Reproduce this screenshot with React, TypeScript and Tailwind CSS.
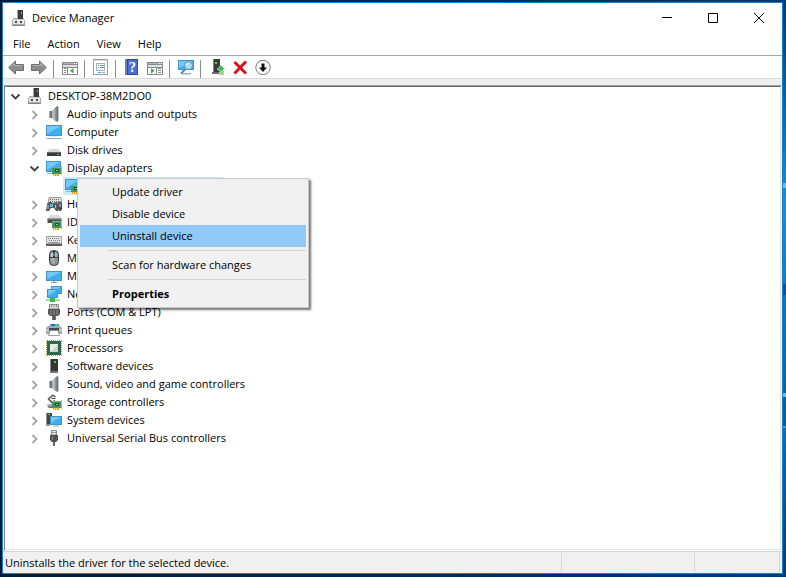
import { useState } from "react";
import type { ReactNode } from "react";

function Icon({ children }: { children: ReactNode }) {
  return (
    <svg width="16" height="16" viewBox="0 0 16 16" className="shrink-0" aria-hidden="true">
      {children}
    </svg>
  );
}

function HostIcon() {
  return (
    <Icon>
      <g shapeRendering="crispEdges">
        <path d="M7 0h5v9H7z" fill="#3d3d3d" />
        <path d="M6 0h1v9H6z" fill="#a3a3a3" />
        <path d="M10 2h1v2h-1z" fill="#35e04a" />
        <path d="M2 8h4v1h6V8h1v2h1v6H1v-6h1z" fill="#a9a9a9" />
        <path d="M2 9h11v1H2z" fill="#c9c9c9" />
        <path d="M2 10h11v4H2z" fill="#e6e6e6" />
        <path d="M4 11h2v2H4zM9 11h2v2H9z" fill="#4a4a4a" />
        <path d="M1 15h13v1H1z" fill="#858585" />
      </g>
    </Icon>
  );
}

function SpeakerIcon() {
  return (
    <Icon>
      <path d="M3 5h3v7H3z" fill="#6f767c" />
      <path d="M3 5h1v7H3z" fill="#a9aeb2" />
      <path d="M6 5l4.500-4.500H12v15h-1.500L6 12z" fill="#9a9fa3" />
      <path d="M6 5l3-3v13l-3-3z" fill="#b5babd" />
      <path d="M9 2l1.500-1.500v15L9 14.500z" fill="#8e9397" />
      <path d="M10.500 .5H12v15h-1.500z" fill="#6d767d" />
      <path d="M12 1h1v14h-1z" fill="#b9c4cc" />
    </Icon>
  );
}

function Screen({ x, y, w, h }: { x: number; y: number; w: number; h: number }) {
  return (
    <g>
      <rect x={x} y={y} width={w} height={h} fill="#3f95c4" />
      <rect x={x + 1} y={y + 1} width={w - 2} height={h - 2} fill="#3eaef2" />
      <path d={`M${x + 1} ${y + 1}h${w - 2}L${x + 1} ${y + h - 2}z`} fill="#74c9fb" />
    </g>
  );
}

function ComputerIcon() {
  return (
    <Icon>
      <Screen x={0} y={1} w={16} h={11} />
      <path d="M5 12h6v1H5z" fill="#dce8ee" />
      <path d="M1 14h14l1 1H0z" fill="#7fb0c6" />
    </Icon>
  );
}

function MonitorIcon() {
  return (
    <Icon>
      <Screen x={0} y={3} w={16} h={10} />
      <path d="M7 13h2v1H7z" fill="#a5b5bd" />
      <path d="M5 14h6v1H5z" fill="#8c9ca4" />
    </Icon>
  );
}

function DiskIcon() {
  return (
    <Icon>
      <path d="M3.500 7h9L15 10H1z" fill="#d9d9d9" />
      <path d="M1 10h14v4H1z" fill="#3a3a3a" />
      <path d="M1 10h14v1H1z" fill="#686868" />
      <path d="M11 12h2v1h-2z" fill="#3fe052" />
    </Icon>
  );
}

function Card() {
  return (
    <g>
      <path d="M6 7h9v7H6z" fill="#3f9460" />
      <path d="M6 7h9v1H6z" fill="#6fb685" />
      <path d="M9 9h4v3H9z" fill="#1c4f32" />
      <path d="M10 10h2v1h-2z" fill="#8fd0a2" />
      <path d="M15 6h1v9h-1z" fill="#a9b0ad" />
      <path d="M7 14h6v2H7z" fill="#f2a516" />
      <path d="M8.500 14v2M10.500 14v2" stroke="#ffdf63" />
    </g>
  );
}

function DisplayIcon() {
  return (
    <Icon>
      <Screen x={0} y={1} w={15} h={11} />
      <path d="M1 13h5v1H1z" fill="#8fb7c9" />
      <Card />
    </Icon>
  );
}

function HidIcon() {
  return (
    <Icon>
      <path d="M3 1.500h12l.5 6.500H2z" fill="#e2e2e2" stroke="#858585" strokeWidth=".8" />
      <path d="M4 3.500h10M4 5.500h10" stroke="#666" strokeDasharray="1 1" />
      <path d="M1 8l2-2h2l2 1h1l1-1h2l1 2v7h-2l-2-3H5l-2 3H0z" fill="#555b61" />
      <path d="M4 8h3v3H4z" fill="#55b4ea" />
      <path d="M12 7.500a2 2 0 014 0V13a2 2 0 01-4 0z" fill="#454b50" />
      <path d="M13.500 7.500h1V11h-1z" fill="#dfe5e8" />
      <path d="M1.500 9h1v4h-1zM9 9h1v3H9z" fill="#b7bdc2" />
    </Icon>
  );
}

function IdeIcon() {
  return (
    <Icon>
      <path d="M4 1h9l2.500 3.500h-14z" fill="#dcdcdc" />
      <path d="M1.500 4.500h14V9h-14z" fill="#4a4a4a" />
      <path d="M1.500 4.500h14v1h-14z" fill="#999" />
      <Card />
    </Icon>
  );
}

function KeyboardIcon() {
  return (
    <Icon>
      <g shapeRendering="crispEdges">
        <path d="M0 4h16v9H0z" fill="#a5a5a5" />
        <path d="M1 5h14v6H1z" fill="#e6e6e6" />
        <path d="M2 6.500h12" stroke="#7b7b7b" strokeDasharray="1 1" />
        <path d="M3 8.500h11" stroke="#7b7b7b" strokeDasharray="1 1" />
        <path d="M2 10.500h1M4 10.500h8M13 10.500h1" stroke="#8b8b8b" />
        <path d="M0 12h16v2H0z" fill="#5c5c5c" />
      </g>
    </Icon>
  );
}

function MouseIcon() {
  return (
    <Icon>
      <rect x="3.500" y=".5" width="9" height="15" rx="4" fill="#8b9196" stroke="#3b3b3b" />
      <path d="M5 7V5a3 3 0 012-3v5z" fill="#c3cbd1" />
      <path d="M9 2a3 3 0 012 3v2H9z" fill="#a9b2b9" />
      <path d="M7 1h2v6H7z" fill="#303030" />
      <path d="M7.500 3h1v3h-1z" fill="#69c8ef" />
      <path d="M4 7h8v1H4z" fill="#444" />
      <path d="M5 8h4v6a4 4 0 01-4-3z" fill="#a3a9ad" />
    </Icon>
  );
}

function NetworkIcon() {
  return (
    <Icon>
      <Screen x={5} y={0} w={11} h={8} />
      <Screen x={1} y={3} w={11} h={9} />
      <path d="M6 12h2v1H6z" fill="#7e98a5" />
      <path d="M0 13h14v2H0z" fill="#a1dba8" />
      <path d="M4 12h5v4H4z" fill="#36b84c" />
    </Icon>
  );
}

function PortIcon() {
  return (
    <Icon>
      <path d="M3.500 .5h9V5h-9z" fill="#d9d9d9" stroke="#777" strokeWidth=".8" />
      <path d="M5 2h6" stroke="#444" strokeDasharray="1 1.500" />
      <path d="M2 5h12v5l-2 2H4l-2-2z" fill="#585858" />
      <path d="M5 6v5M8 6v5M11 6v5" stroke="#8b8b8b" />
      <path d="M6 12h1v4H6zM9 12h1v4H9z" fill="#777" />
      <path d="M7 12h2v4H7z" fill="#555" />
    </Icon>
  );
}

function PrinterIcon() {
  return (
    <Icon>
      <path d="M4 2h9v3H4z" fill="#2f9deb" />
      <path d="M6 2h3v2H6z" fill="#1860c8" />
      <path d="M9 2h3v2H9z" fill="#41cf60" />
      <path d="M2 4h12l2 2v6H0V6z" fill="#a3a9ad" />
      <path d="M0 7h16v2H0z" fill="#c9cdd0" />
      <path d="M3 6h10v3H3z" fill="#454c51" />
      <path d="M4 8.500h8l1.500 5h-11z" fill="#fff" stroke="#8b8b8b" strokeWidth=".8" />
    </Icon>
  );
}

function CpuIcon() {
  return (
    <Icon>
      <g shapeRendering="crispEdges">
        <path d="M1 .5h15M1 15.500h15M.5 1v15M15.500 1v15" stroke="#b99a4c" strokeDasharray="1 1" />
        <path d="M1 1h14v14H1z" fill="#2d6a48" />
        <path d="M4 4h8v8H4z" fill="#cdd2cf" />
        <path d="M4 4h8L4 12z" fill="#e8ebe9" />
      </g>
    </Icon>
  );
}

function SoftwareIcon() {
  return (
    <Icon>
      <path d="M5 1h7v12H5z" fill="#353535" />
      <path d="M4 1h1v12H4z" fill="#8b8b8b" />
      <path d="M8 3h2v2H8z" fill="#3ae34d" />
      <path d="M4 13h8v2H4z" fill="#777" />
    </Icon>
  );
}

function StorageIcon() {
  return (
    <Icon>
      <path d="M7 1L2.500 5 6 8.500 9 6.500" fill="none" stroke="#555" strokeWidth="1.500" />
      <path d="M5.500 4.500h4M6.500 1l3 2" fill="none" stroke="#444" strokeWidth="1.200" />
      <path d="M1 10h5l1 4H3z" fill="#b4b4b4" />
      <path d="M1 12h7v2H3z" fill="#777" />
      <Card />
    </Icon>
  );
}

function SystemIcon() {
  return (
    <Icon>
      <path d="M1 1h5v12H1z" fill="#454545" />
      <path d="M0 1h1v12H0z" fill="#909090" />
      <path d="M2 2h2v1H2z" fill="#3ae34d" />
      <path d="M0 12h4v2H0z" fill="#909090" />
      <Screen x={4} y={4} w={12} h={9} />
      <path d="M7 13.500h6v1H7z" fill="#8fa9b6" />
    </Icon>
  );
}

function UsbIcon() {
  return (
    <Icon>
      <path d="M5.500 .5h5V5h-5z" fill="#e2e2e2" stroke="#8b8b8b" />
      <path d="M6.500 2h1v1h-1zM8.500 2h1v1h-1z" fill="#555" />
      <path d="M4 5h8v5l-2 2H6l-2-2z" fill="#505050" />
      <path d="M6 6h1v4H6z" fill="#8b8b8b" />
      <path d="M7 12h2v4H7z" fill="#666" />
    </Icon>
  );
}

function ArrowIcon({ back }: { back?: boolean }) {
  return (
    <Icon>
      <path
        d={back ? "M.7 8.500l6.800-6.500v3.500h8v6h-8V15z" : "M15.300 8.500L8.500 2v3.500h-8v6h8V15z"}
        fill="#8d8d8d"
        stroke="#6d6d6d"
      />
      <path
        d={back ? "M2.500 8L6.500 4.500v2h8" : "M13.500 8L9.500 4.500v2h-8"}
        fill="none"
        stroke="#b3b3b3"
      />
    </Icon>
  );
}

function PaneIcon({ mirrored }: { mirrored?: boolean }) {
  return (
    <Icon>
      <g shapeRendering="crispEdges">
        <path d="M0 3h16v13H0z" fill="#858b91" />
        <path d="M1 4h14v1H1z" fill="#aeb3b8" />
        <path d="M12 4h1v1h-1zM14 4h1v1h-1z" fill="#fff" />
        <path d="M1 6h14v2H1z" fill="#dfe1e3" />
        <path d="M1 9h14v6H1z" fill="#fff" />
        {mirrored ? (
          <>
            <path d="M9 8h1v7H9z" fill="#858b91" />
            <path d="M11 9.500h3M11 11.500h3M11 13.500h3" stroke="#858b91" />
          </>
        ) : (
          <>
            <path d="M5 8h1v7H5z" fill="#858b91" />
            <path d="M2 9.500h2M2 11.500h2M2 13.500h2" stroke="#858b91" />
          </>
        )}
      </g>
      <path d={mirrored ? "M4 9v5.500l3.500-2.750z" : "M11.500 9v5.500L8 11.750z"} fill="#2fb32c" />
    </Icon>
  );
}

function PropertiesIcon() {
  return (
    <Icon>
      <g shapeRendering="crispEdges">
        <path d="M0 0h15v16H0z" fill="#9aa1a7" />
        <path d="M1 1h13v14H1z" fill="#fff" />
        <path d="M1 1h13v1H1z" fill="#d5d8da" />
        <path d="M3 4h9v8H3z" fill="#aab0b5" />
        <path d="M4 5h7v6H4z" fill="#fff" />
        <path d="M5 6.500h1M5 8.500h1" stroke="#35aee5" />
        <path d="M7 6.500h4M7 8.500h4" stroke="#858b91" />
        <path d="M5 13h3v1H5z" fill="#37b4e9" />
        <path d="M9 13h3v1H9z" fill="#aaa" />
      </g>
    </Icon>
  );
}

function HelpIcon() {
  return (
    <Icon>
      <path d="M1 0h13v16H1z" fill="#2b489c" />
      <path d="M4 1h9v14H4z" fill="#4a6fd0" />
      <path d="M1 0h2v16H1z" fill="#6b80bb" />
      <text x="8.500" y="13" textAnchor="middle" fontFamily="Liberation Serif, serif" fontSize="14" fontWeight="700" fill="#fff">
        ?
      </text>
    </Icon>
  );
}

function ScanIcon() {
  return (
    <Icon>
      <Screen x={0} y={1} w={16} h={10} />
      <path d="M4 14h9v1.500H4z" fill="#9fb5c0" />
      <path d="M7.500 10L3 14.500" stroke="#4b8db4" strokeWidth="1.800" />
      <circle cx="10.500" cy="6.500" r="4" fill="#a9ddfa" stroke="#6893ab" />
      <path d="M8.500 6a2.200 2.200 0 012-1.800" stroke="#fff" fill="none" />
    </Icon>
  );
}

function UpdateIcon() {
  return (
    <Icon>
      <path d="M5 0h6v13H5z" fill="#3b3b3b" />
      <path d="M4 0h1v13H4z" fill="#858585" />
      <path d="M6 3h2v2H6z" fill="#3ae34d" />
      <path d="M3 13h7v2H3z" fill="#6d6d6d" />
      <path d="M12 6l4 4.500h-2V12h-4v-1.500H8z" fill="#31be38" stroke="#fff" strokeWidth=".5" />
      <path d="M10 12.500h5v1h-5zM10 14.500h5v1h-5z" fill="#31be38" />
    </Icon>
  );
}

function RemoveIcon() {
  return (
    <Icon>
      <path d="M2.500 3l11.500 11.500M14 2.500L2.500 14.500" stroke="#d9121b" strokeWidth="3" />
    </Icon>
  );
}

function DownIcon() {
  return (
    <Icon>
      <circle cx="8" cy="8.500" r="7.200" fill="#fff" stroke="#666" strokeWidth=".9" />
      <path d="M6.500 4.500h3v4H12L8 13 4 8.500h2.500z" fill="#111" />
    </Icon>
  );
}

type Device = { label: string; icon: () => ReactNode; open?: boolean };

const devices: Device[] = [
  { label: "Audio inputs and outputs", icon: SpeakerIcon },
  { label: "Computer", icon: ComputerIcon },
  { label: "Disk drives", icon: DiskIcon },
  { label: "Display adapters", icon: DisplayIcon, open: true },
  { label: "Human Interface Devices", icon: HidIcon },
  { label: "IDE ATA/ATAPI controllers", icon: IdeIcon },
  { label: "Keyboards", icon: KeyboardIcon },
  { label: "Mice and other pointing devices", icon: MouseIcon },
  { label: "Monitors", icon: MonitorIcon },
  { label: "Network adapters", icon: NetworkIcon },
  { label: "Ports (COM & LPT)", icon: PortIcon },
  { label: "Print queues", icon: PrinterIcon },
  { label: "Processors", icon: CpuIcon },
  { label: "Software devices", icon: SoftwareIcon },
  { label: "Sound, video and game controllers", icon: SpeakerIcon },
  { label: "Storage controllers", icon: StorageIcon },
  { label: "System devices", icon: SystemIcon },
  { label: "Universal Serial Bus controllers", icon: UsbIcon },
];

function Chevron({ open, label, onClick }: { open: boolean; label: string; onClick?: () => void }) {
  return (
    <button
      type="button"
      aria-label={`${open ? "Collapse" : "Expand"} ${label}`}
      aria-expanded={open}
      onClick={onClick}
      className="flex h-4 w-4 items-center justify-center"
    >
      <svg width="16" height="16" viewBox="0 0 16 16" fill="none" aria-hidden="true">
        {open ? (
          <path d="M3.500 6.500l4 4 4-4" stroke="#404040" strokeWidth="1.800" />
        ) : (
          <path d="M5.500 5l4 4-4 4" stroke="#a6a6a6" strokeWidth="1.800" />
        )}
      </svg>
    </button>
  );
}

function DeviceRow({ device }: { device: Device }) {
  const [open, setOpen] = useState(Boolean(device.open));
  const Glyph = device.icon;
  return (
    <li>
      <div className="flex h-[18px] items-center">
        <Chevron open={open} label={device.label} onClick={() => setOpen(!open)} />
        <span className="ml-[3px] flex">
          <Glyph />
        </span>
        <span className="ml-[5px] whitespace-nowrap">{device.label}</span>
      </div>
      {open && device.open && (
        <ul className="pl-9">
          <li aria-label="Display adapter" className="flex h-[18px] w-40 items-center bg-[#cce8ff] pl-0.5">
            <DisplayIcon />
          </li>
        </ul>
      )}
    </li>
  );
}

function Divider() {
  return <span className="mr-[5px] ml-0.5 h-[18px] w-px bg-[#8c8c8c]" />;
}

function Tool({ label, children }: { label: string; children: ReactNode }) {
  return (
    <button type="button" aria-label={label} className="flex h-[22px] w-[23px] items-center pl-[3px]">
      {children}
    </button>
  );
}

function MenuItem({ children, className = "" }: { children: ReactNode; className?: string }) {
  return (
    <button type="button" role="menuitem" className={`block h-[22px] w-full pl-8 text-left ${className}`}>
      {children}
    </button>
  );
}

function MenuRule() {
  return <div role="separator" className="my-[3px] ml-7 h-px bg-[#d2d2d2]" />;
}

function ContextMenu() {
  return (
    <div
      role="menu"
      className="absolute top-[91px] left-[71px] w-[232px] border border-[#c8c8c8] bg-[#f1f1f1] p-0.5 shadow-[2px_2px_2px_rgba(0,0,0,0.55)]"
    >
      <MenuItem>Update driver</MenuItem>
      <MenuItem>Disable device</MenuItem>
      <MenuItem className="bg-[#91c9f7]">Uninstall device</MenuItem>
      <MenuRule />
      <MenuItem>Scan for hardware changes</MenuItem>
      <MenuRule />
      <MenuItem className="font-bold">Properties</MenuItem>
    </div>
  );
}

export default function App() {
  return (
    <div className="flex h-screen bg-linear-to-r from-[#001a36] to-[#003b73] pt-0.5 pl-0.5 font-['Open_Sans','Noto_Sans',sans-serif] text-[11px] leading-[18px] text-black">
      <main className="mb-[3px] flex min-w-0 flex-1 flex-col border border-[#1580d8] bg-white">
        <header className="flex h-[30px] shrink-0 items-center pl-2">
          <HostIcon />
          <h1 className="ml-[5px] flex-1">Device Manager</h1>
          <button type="button" aria-label="Minimize" className="flex h-full w-[46px] items-center justify-center">
            <svg width="10" height="10" viewBox="0 0 10 10" stroke="#000" aria-hidden="true">
              <path d="M0 4.500h10" />
            </svg>
          </button>
          <button type="button" aria-label="Maximize" className="flex h-full w-[46px] items-center justify-center">
            <svg width="10" height="10" viewBox="0 0 10 10" stroke="#000" fill="none" aria-hidden="true">
              <path d="M.5 .5h9v9h-9z" />
            </svg>
          </button>
          <button type="button" aria-label="Close" className="flex h-full w-[46px] items-center justify-center">
            <svg width="10" height="10" viewBox="0 0 10 10" stroke="#000" fill="none" aria-hidden="true">
              <path d="M0 0l10 10M10 0L0 10" />
            </svg>
          </button>
        </header>
        <nav className="flex h-[22px] shrink-0 items-center gap-px pl-0.5">
          <button type="button" className="px-2">File</button>
          <button type="button" className="px-2">Action</button>
          <button type="button" className="px-2">View</button>
          <button type="button" className="px-2">Help</button>
        </nav>
        <div role="toolbar" aria-label="Actions" className="flex h-6 shrink-0 items-end border-t border-b border-t-[#a9a9a9] border-b-[#dadada] pl-0.5">
          <Tool label="Back"><ArrowIcon back /></Tool>
          <Tool label="Forward"><ArrowIcon /></Tool>
          <Divider />
          <Tool label="Show or hide console tree"><PaneIcon /></Tool>
          <Divider />
          <Tool label="Properties"><PropertiesIcon /></Tool>
          <Divider />
          <Tool label="Help"><HelpIcon /></Tool>
          <Tool label="Show or hide action pane"><PaneIcon mirrored /></Tool>
          <Divider />
          <Tool label="Scan for hardware changes"><ScanIcon /></Tool>
          <Divider />
          <Tool label="Update driver"><UpdateIcon /></Tool>
          <Tool label="Uninstall device"><RemoveIcon /></Tool>
          <Tool label="Disable device"><DownIcon /></Tool>
        </div>
        <div className="flex min-h-0 flex-1 flex-col bg-[#f0f0f0] pt-1.5 pl-px">
          <section className="flex min-h-0 flex-1 border border-t-[#a0a0a0] border-r-white border-b-white border-l-[#808080]">
            <div className="relative flex-1 border border-t-[#696969] border-r-[#e3e3e3] border-b-[#e3e3e3] border-l-white bg-white pl-0.5">
              <div className="flex h-[18px] items-center">
                <Chevron open label="DESKTOP-38M2DO0" />
                <span className="ml-[3px] flex">
                  <HostIcon />
                </span>
                <span className="ml-[5px]">DESKTOP-38M2DO0</span>
              </div>
              <ul className="pl-[19px]">
                {devices.map((device) => (
                  <DeviceRow key={device.label} device={device} />
                ))}
              </ul>
              <ContextMenu />
            </div>
          </section>
        </div>
        <footer className="flex h-[22px] shrink-0 border-t border-[#d7d7d7] bg-[#f0f0f0] py-px pr-0.5">
          <p className="flex-1 border-r border-[#d7d7d7] pt-px pl-0.5">Uninstalls the driver for the selected device.</p>
          <div className="w-[133px] border-r border-[#d7d7d7]" />
          <div className="w-[85px] border-r border-[#d7d7d7]" />
        </footer>
      </main>
      <aside className="flex w-[3px] flex-col bg-linear-to-b from-[#003d76] via-[#0a96dc] via-35% to-[#003a70] pt-[181px]">
        <span className="h-[5px] bg-[#6dbde8]" />
        <span className="mt-[96px] h-[11px] bg-[#0650a0]" />
        <span className="mt-[98px] h-1 bg-[#6dbde8]" />
        <span className="mt-[29px] h-0.5 bg-[#3f9fd5]" />
        <span className="flex-1 bg-linear-to-b from-[#0571c2] to-[#003a70]" />
      </aside>
    </div>
  );
}
